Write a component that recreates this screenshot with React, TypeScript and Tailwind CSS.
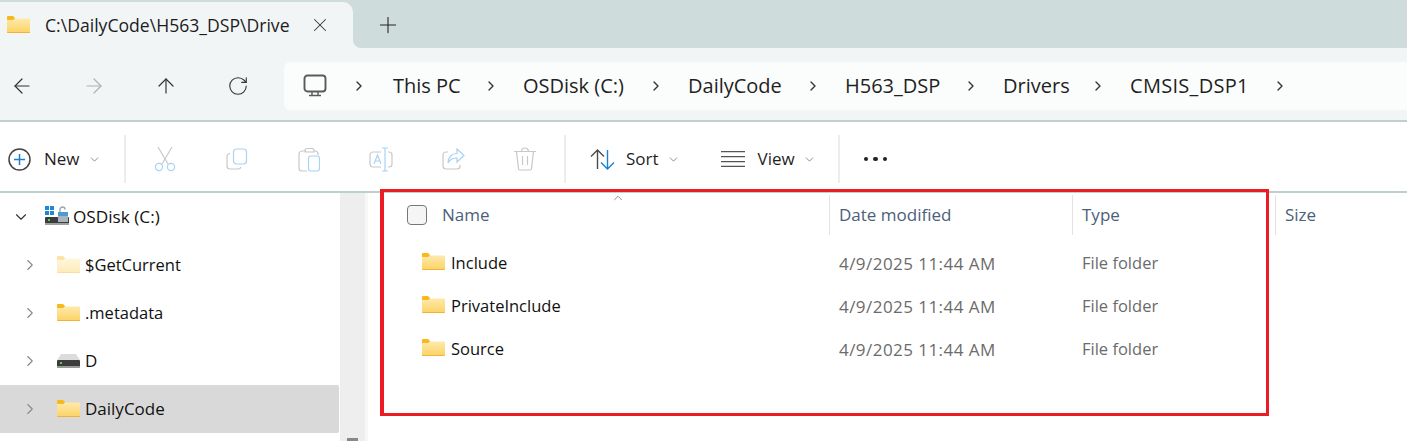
import React from "react";
import { ArrowLeft, ArrowRight, ArrowUp, ChevronDown, ChevronRight, ChevronUp, Plus, RotateCw, X } from "lucide-react";

const font = "font-['Open_Sans','Noto_Sans',sans-serif]";

function Folder({ pale = false }: { pale?: boolean }) {
  const id = pale ? "folderPale" : "folderBody";
  return (
    <svg width="23" height="18" viewBox="0 0 23 18" className="shrink-0">
      <defs>
        <linearGradient id={id} x1="0" y1="0" x2="0" y2="1">
          <stop offset="0" stopColor={pale ? "#fff6dc" : "#feeaac"} />
          <stop offset="1" stopColor={pale ? "#fdeabb" : "#fcd264"} />
        </linearGradient>
      </defs>
      <path d="M0 1a1 1 0 0 1 1-1h5l2.500 2.500H8L6.500 4H0z" fill={pale ? "#fbe3a4" : "#f9b81c"} />
      <path d="M0 4h6.500L8 2.500h14a1 1 0 0 1 1 1V16a1 1 0 0 1-1 1H1a1 1 0 0 1-1-1z" fill={`url(#${id})`} />
      <path d="M0 16h23a1 1 0 0 1-1 1H1a1 1 0 0 1-1-1z" fill={pale ? "#f8dfa0" : "#f2b233"} />
    </svg>
  );
}

function Drive() {
  return (
    <svg width="23" height="14" viewBox="0 0 23 14">
      <path d="M4 0h15l4 6H0z" fill="#dcdcdc" />
      <rect x="0" y="6" width="23" height="8" rx="1" fill="#3c3c3c" />
      <rect x="3" y="8" width="2" height="2" fill="#4fd04f" />
      <rect x="0" y="12" width="23" height="2" fill="#9a9a9a" />
    </svg>
  );
}

function SystemDrive() {
  return (
    <svg width="24" height="20" viewBox="0 0 24 20">
      <rect x="0" y="0" width="4" height="4" fill="#1e88d8" />
      <rect x="5" y="0" width="4" height="4" fill="#1e88d8" />
      <rect x="0" y="5" width="4" height="4" fill="#1e88d8" />
      <rect x="5" y="5" width="4" height="4" fill="#1e88d8" />
      <path d="M15 7V3.500a2.500 2.500 0 0 1 5 0" fill="none" stroke="#9aa5ad" strokeWidth="1.4" />
      <rect x="0" y="11" width="24" height="7" rx="1" fill="#3c3c3c" />
      <rect x="3" y="13" width="2" height="2" fill="#4fd04f" />
      <rect x="0" y="17" width="24" height="2" fill="#a0a0a0" />
      <rect x="13" y="6" width="10" height="4" fill="#4f9ad6" />
      <rect x="13" y="10" width="10" height="6" fill="#a9b4bc" />
    </svg>
  );
}

function Computer() {
  return (
    <svg width="24" height="24" viewBox="0 0 24 24" fill="none" stroke="#5a5a5a" strokeWidth="1.9">
      <rect x="1.500" y="1.500" width="21" height="16" rx="3" />
      <path d="M9 18v3M15 18v3M6 21.500h12" strokeWidth="1.4" />
    </svg>
  );
}

function Scissors() {
  return (
    <svg width="22" height="26" viewBox="0 0 22 26" fill="none" strokeWidth="1.2">
      <path d="M4 1l10 17M18 1L8 18" stroke="#c8c8c8" />
      <circle cx="5" cy="21" r="3.600" stroke="#a9d2f3" />
      <circle cx="17" cy="21" r="3.600" stroke="#a9d2f3" />
    </svg>
  );
}

function Copy() {
  return (
    <svg width="22" height="22" viewBox="0 0 22 22" fill="none" strokeWidth="1.2">
      <path d="M4 5.500A3 3 0 0 0 1 8.500V18a3 3 0 0 0 3 3h8a3 3 0 0 0 3-2" stroke="#c8c8c8" />
      <rect x="7.500" y="1" width="13" height="15" rx="3" stroke="#a9d2f3" />
    </svg>
  );
}

function Paste() {
  return (
    <svg width="22" height="25" viewBox="0 0 22 25" fill="none" strokeWidth="1.2">
      <path d="M8 4H4a3 3 0 0 0-3 3v14a3 3 0 0 0 3 3h5M16 4h1a3 3 0 0 1 3 3v1M7 4a2 2 0 0 1 2-2.500h5a2 2 0 0 1 2 2.500v1H7z" stroke="#c8c8c8" />
      <rect x="10.500" y="9" width="11" height="15" rx="2.500" stroke="#a9d2f3" />
    </svg>
  );
}

function Rename() {
  return (
    <svg width="24" height="25" viewBox="0 0 24 25" fill="none" strokeWidth="1.2">
      <path d="M12 5H4a3 3 0 0 0-3 3v9a3 3 0 0 0 3 3h8M19 5h1a3 3 0 0 1 3 3v9a3 3 0 0 1-3 3h-1" stroke="#c8c8c8" />
      <path d="M13 1h6M16 1v23M13 24h6M5 17l3.500-9L12 17M6 14h5" stroke="#a9d2f3" />
    </svg>
  );
}

function Share() {
  return (
    <svg width="23" height="22" viewBox="0 0 23 22" fill="none" strokeWidth="1.2">
      <path d="M6 4H4a3 3 0 0 0-3 3v11a3 3 0 0 0 3 3h11a3 3 0 0 0 3-3v-1" stroke="#c8c8c8" />
      <path d="M15 1l7 6.500L15 14v-4c-4 0-7 1-9 5 0-6 4-9.500 9-9.500z" stroke="#a9d2f3" />
    </svg>
  );
}

function Trash() {
  return (
    <svg width="22" height="24" viewBox="0 0 22 24" fill="none" stroke="#c8c8c8" strokeWidth="1.2">
      <path d="M0 4.500h22M7.500 4.500a3.500 3.500 0 0 1 7 0M2.500 4.500l2 17a1.500 1.500 0 0 0 1.500 1.500h10a1.500 1.500 0 0 0 1.500-1.500l2-17M8.500 9v9M13.500 9v9" />
    </svg>
  );
}

function SortIcon() {
  return (
    <svg width="25" height="21" viewBox="0 0 25 21" fill="none" strokeWidth="1.4">
      <path d="M1 7.500L7.500 1 14 7.500M7.500 1v19" stroke="#4a4a4a" />
      <path d="M11 13.500l6.500 6.500 6.500-6.500M17.500 20V1" stroke="#1c7fd6" />
    </svg>
  );
}

function ViewIcon() {
  return (
    <svg width="24" height="16" viewBox="0 0 24 16" stroke="#555" strokeWidth="1.2">
      <path d="M0 .6h24M0 5.600h24M0 10.600h24M0 15.400h24" />
    </svg>
  );
}

function Disabled({ children }: { children: React.ReactNode }) {
  return <div className="flex h-full w-[72px] items-center justify-center">{children}</div>;
}

function Sep() {
  return <div className="h-[48px] w-[2px] bg-[#ededed]" />;
}

const crumbs = [
  { label: "This PC", w: "w-[68px]" },
  { label: "OSDisk (C:)", w: "w-[103px]" },
  { label: "DailyCode", w: "w-[95px]" },
  { label: "H563_DSP", w: "w-[96px]" },
  { label: "Drivers", w: "w-[65px]" },
  { label: "CMSIS_DSP1", w: "w-[120px] tracking-[0.3px]" },
];

const tree = [
  { name: "$GetCurrent", icon: <Folder pale />, size: "text-[16.500px]" },
  { name: ".metadata", icon: <Folder />, size: "text-[16.500px]" },
  { name: "D", icon: <Drive />, size: "text-[17px]" },
  { name: "DailyCode", icon: <Folder />, size: "text-[17px]", selected: true },
];

const files = ["Include", "PrivateInclude", "Source"];

export default function App() {
  return (
    <div className={`relative flex h-[441px] w-[1407px] flex-col overflow-hidden bg-white ${font}`}>
      {/* tab strip */}
      <div className="flex h-[48px] shrink-0 bg-[#cfdcdc] pt-[2px]">
        <div className="flex w-[353px] items-center rounded-tr-[10px] bg-[#f2f5f6] pl-[7px]">
          <Folder />
          <span className="ml-[15px] w-[247px] whitespace-nowrap text-[17.600px] text-[#1c1c1c]">C:\DailyCode\H563_DSP\Drive</span>
          <X size={22} strokeWidth={1.1} className="ml-[17px] text-[#333]" />
        </div>
        <div className="flex-1 bg-[#f2f5f6]">
          <div className="flex h-full items-center rounded-bl-[8px] bg-[#cfdcdc] pl-[22px]">
            <Plus size={26} strokeWidth={1} className="text-[#222]" />
          </div>
        </div>
      </div>

      {/* nav bar */}
      <div className="flex h-[74px] shrink-0 items-center border-b-[2px] border-[#bfcfcf] bg-[#f2f5f6] pt-[4px]">
        <div className="flex w-[284px] items-center pl-[10px] text-[#333]">
          <ArrowLeft size={24} strokeWidth={1.2} />
          <ArrowRight size={24} strokeWidth={1.2} className="ml-[48px] text-[#b0b0b0]" />
          <ArrowUp size={24} strokeWidth={1.2} className="ml-[48px]" />
          <RotateCw size={22} strokeWidth={1.2} className="ml-[49px]" />
        </div>
        <div className="flex h-[48px] flex-1 items-center rounded-l-[6px] bg-[#fbfcfc] pl-[19px]">
          <Computer />
          <div className="ml-[24px] flex items-center">
            <ChevronRight size={16} strokeWidth={2} className="mr-[25px] text-[#333]" />
            <div className="flex items-center gap-[23px]">
              {crumbs.map((c) => (
                <React.Fragment key={c.label}>
                  <span className={`whitespace-nowrap pl-[1px] text-[20px] text-[#1f1f1f] ${c.w}`}>{c.label}</span>
                  <ChevronRight size={16} strokeWidth={2} className="text-[#333]" />
                </React.Fragment>
              ))}
            </div>
          </div>
        </div>
      </div>

      {/* command bar */}
      <div className="flex h-[69px] shrink-0 items-center pt-[5px]">
        <div className="flex w-[124px] items-center pl-[8px]">
          <svg width="23" height="23" viewBox="0 0 23 23" fill="none" strokeWidth="1.5">
            <circle cx="11.500" cy="11.500" r="10.500" stroke="#444" />
            <path d="M11.500 6v11M6 11.500h11" stroke="#1c7fd6" />
          </svg>
          <span className="ml-[13px] text-[17px] text-[#1f1f1f]">New</span>
          <ChevronDown size={13} strokeWidth={1.2} className="ml-[8px] text-[#555]" />
        </div>
        <Sep />
        <div className="flex h-[48px] items-center pl-[3px]">
          <Disabled><Scissors /></Disabled>
          <Disabled><Copy /></Disabled>
          <Disabled><Paste /></Disabled>
          <Disabled><Rename /></Disabled>
          <Disabled><Share /></Disabled>
          <Disabled><Trash /></Disabled>
        </div>
        <div className="ml-[3px]"><Sep /></div>
        <div className="flex items-center pl-[24px]">
          <SortIcon />
          <span className="ml-[11px] text-[17px] text-[#1f1f1f]">Sort</span>
          <ChevronDown size={13} strokeWidth={1.2} className="ml-[8px] text-[#555]" />
        </div>
        <div className="flex items-center pl-[41px]">
          <ViewIcon />
          <span className="ml-[13px] text-[17px] text-[#1f1f1f]">View</span>
          <ChevronDown size={13} strokeWidth={1.2} className="ml-[8px] text-[#555]" />
        </div>
        <div className="ml-[22px]"><Sep /></div>
        <div className="ml-[24px] flex gap-[5px]">
          <span className="size-[4.500px] rounded-full bg-[#222]" />
          <span className="size-[4.500px] rounded-full bg-[#222]" />
          <span className="size-[4.500px] rounded-full bg-[#222]" />
        </div>
      </div>

      {/* body */}
      <div className="flex flex-1 border-t-[2px] border-[#bfcfcf]">
        {/* tree */}
        <div className="w-[339px] shrink-0">
          <div className="flex h-[48px] items-center pl-[12px]">
            <ChevronDown size={18} strokeWidth={1.5} className="text-[#333]" />
            <div className="ml-[15px] -mt-[3px]"><SystemDrive /></div>
            <span className="ml-[4px] text-[17.200px] text-[#111]">OSDisk (C:)</span>
          </div>
          {tree.map((t) => (
            <div key={t.name} className={`flex h-[48px] items-center pl-[21px] ${t.selected ? "rounded-r-[2px] bg-[#d9d9d9]" : ""}`}>
              <ChevronRight size={18} strokeWidth={1.5} className="text-[#8a8a8a]" />
              <div className="ml-[18px] flex w-[23px] justify-center">{t.icon}</div>
              <span className={`ml-[5px] text-[#111] ${t.size}`}>{t.name}</span>
            </div>
          ))}
        </div>
        <div className="relative ml-[1px] w-[25px] shrink-0 bg-[#eeeeee]">
          <div className="absolute bottom-0 left-[7px] h-[3px] w-[11px] bg-[#888]" />
        </div>
        <div className="w-[3px] shrink-0 bg-[#f7f7f7]" />

        {/* file list */}
        <div className="relative flex-1">
          <ChevronUp size={14} strokeWidth={1.2} className="absolute left-[243px] -top-[2px] text-[#666]" />
          <div className="flex h-[49px] items-start pt-[2px] text-[17px] text-[#4c607a]">
            <div className="flex h-[40px] w-[461px] items-center pl-[39px]">
              <span className="size-[20px] rounded-[4px] border border-[#777] bg-[#f5f5f5]" />
              <span className="ml-[15px]">Name</span>
            </div>
            <div className="flex h-[40px] w-[243px] items-center border-l border-[#e3e3e3] pl-[9px]">Date modified</div>
            <div className="flex h-[40px] w-[203px] items-center border-l border-[#e3e3e3] pl-[9px]">Type</div>
            <div className="flex h-[40px] flex-1 items-center border-l border-[#e3e3e3] pl-[9px]">Size</div>
          </div>
          {files.map((f) => (
            <div key={f} className="flex h-[43px] items-center text-[16.500px]">
              <div className="flex w-[461px] items-center pl-[54px]">
                <div className="-mt-[3px]"><Folder /></div>
                <span className="ml-[6px] text-[#111]">{f}</span>
              </div>
              <div className="w-[243px] pl-[10px] text-[17px] tracking-[0.45px] text-[#6b6b6b]">4/9/2025 11:44 AM</div>
              <div className="pl-[10px] text-[#6b6b6b]">File folder</div>
            </div>
          ))}
        </div>
      </div>

      {/* red annotation box */}
      <div className="pointer-events-none absolute left-[380px] top-[189px] h-[227px] w-[889px] border-y-[3px] border-r-[3px] border-l-[4px] border-[#ed1c24]" />
    </div>
  );
}
